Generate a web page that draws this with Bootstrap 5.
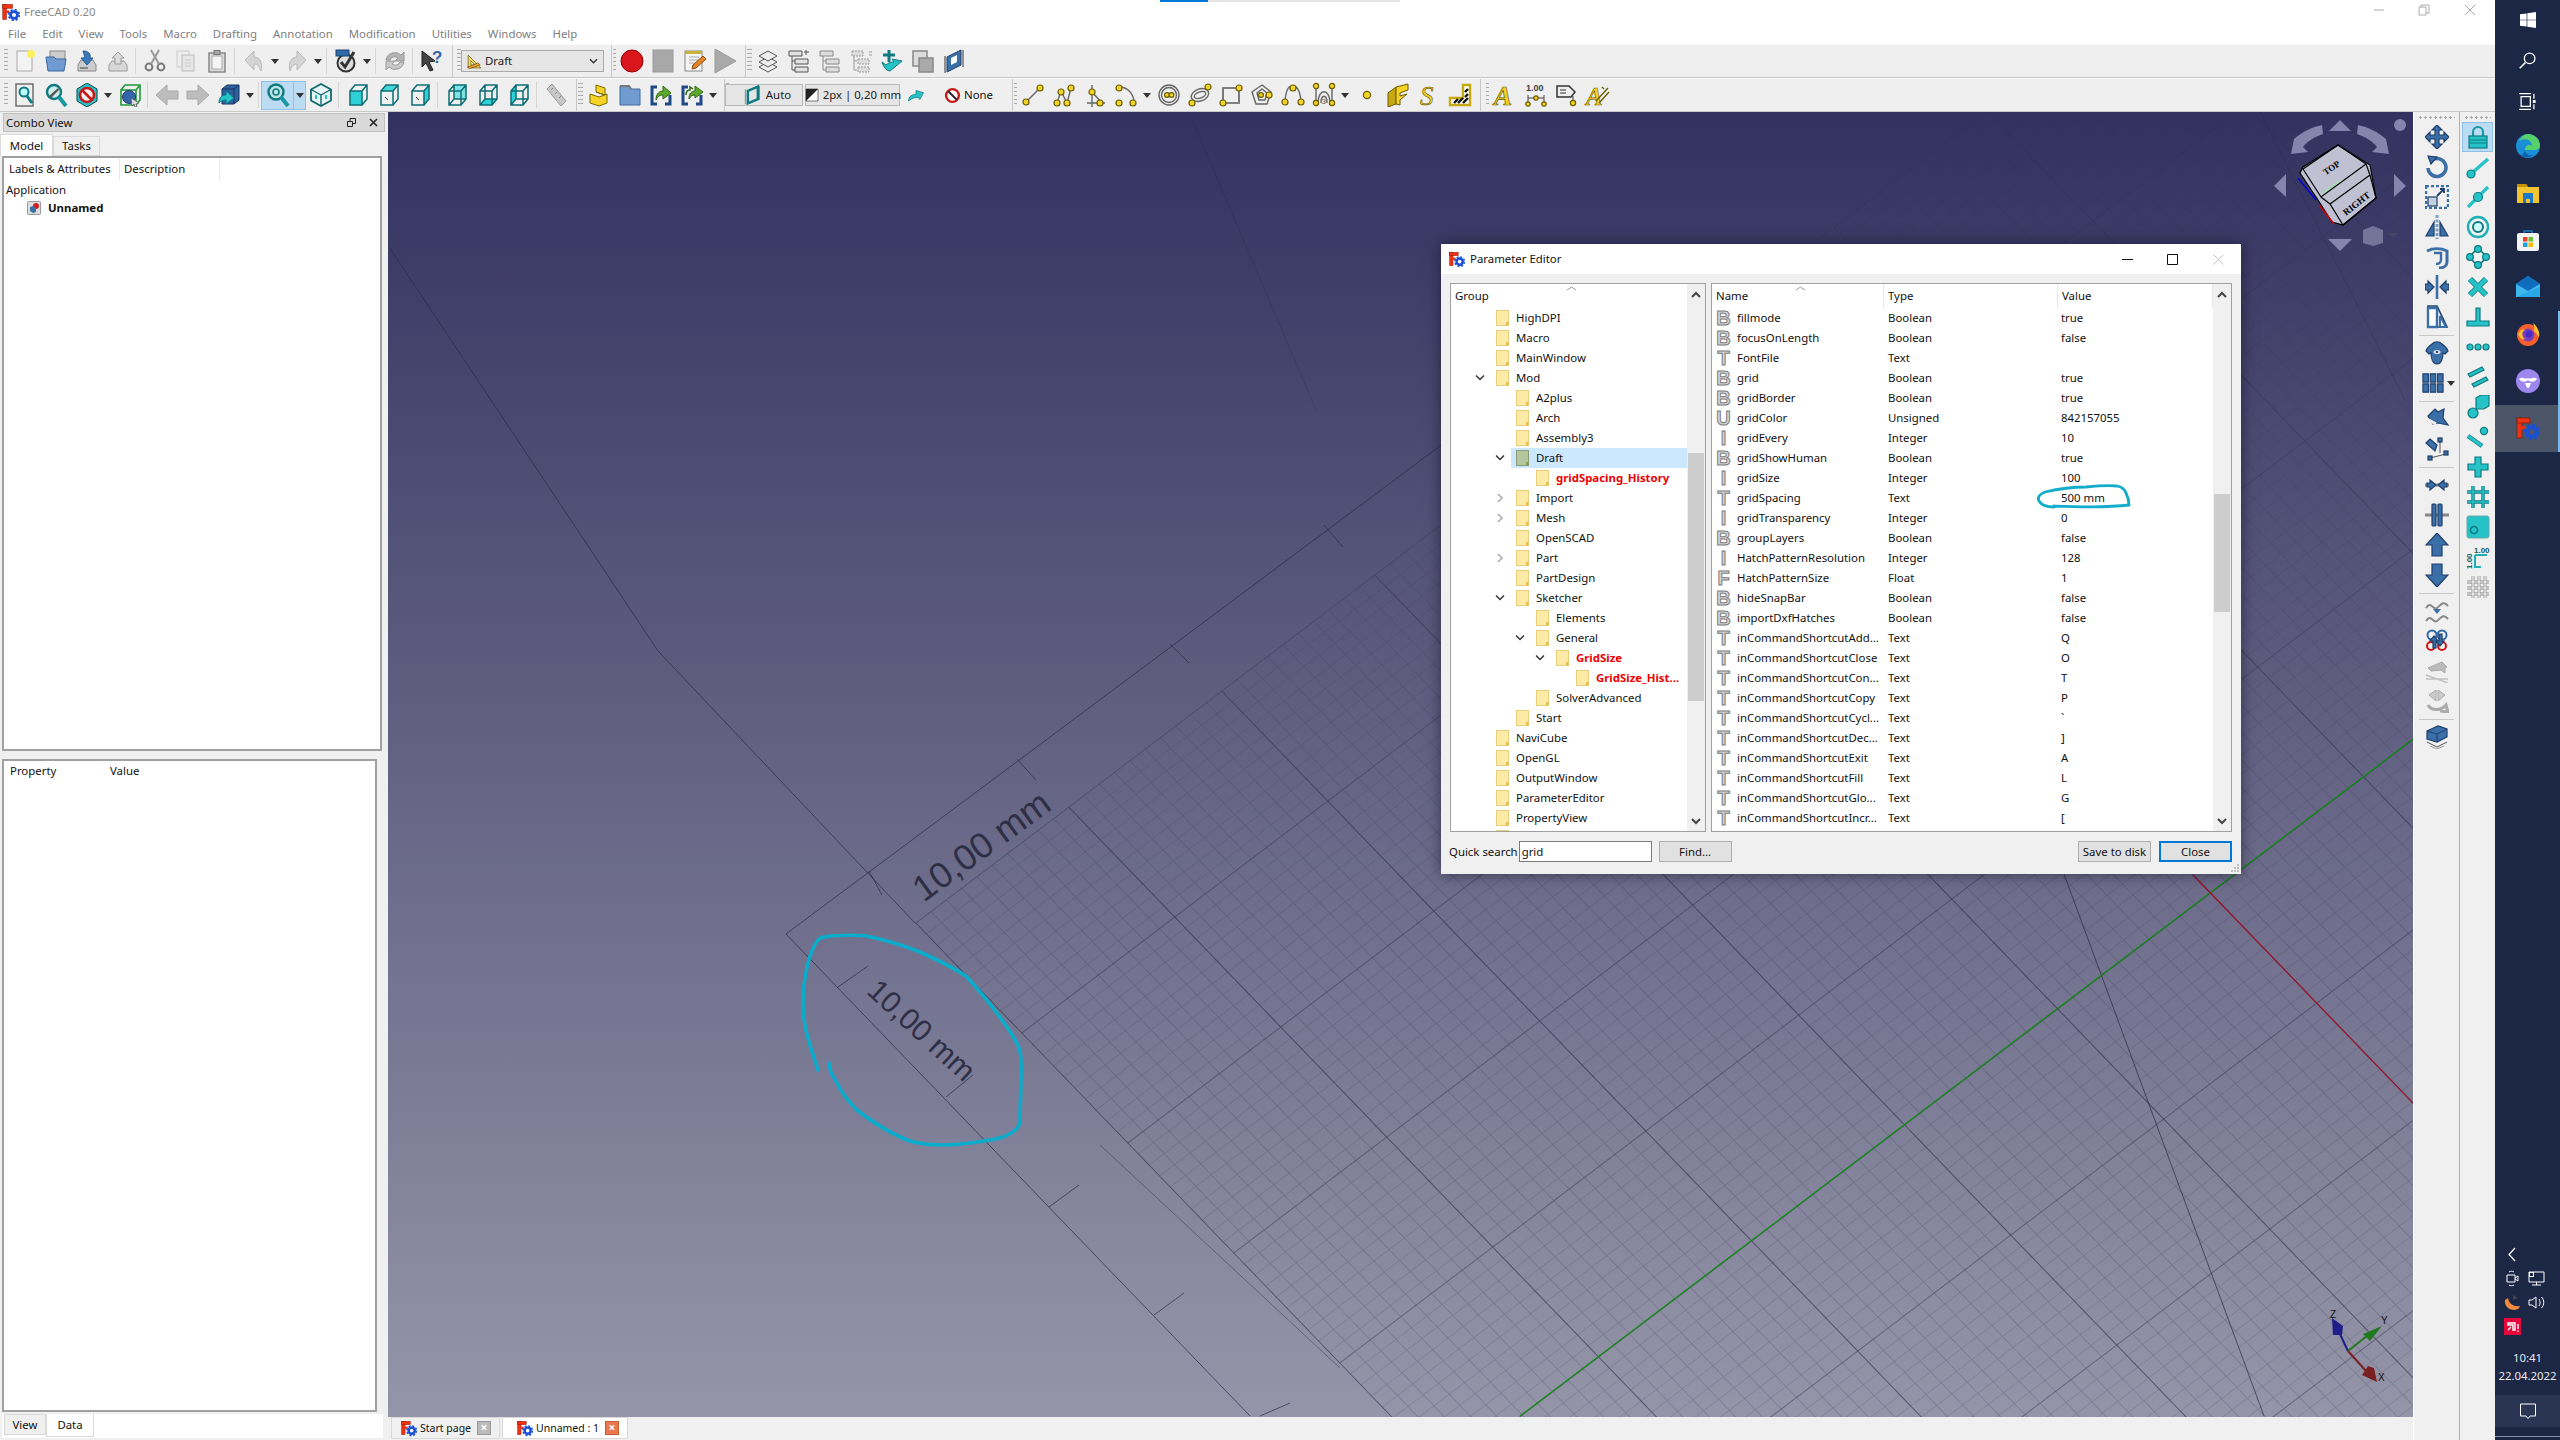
<!DOCTYPE html>
<html lang="en"><head><meta charset="utf-8"><title>FreeCAD 0.20</title>
<link href="https://cdn.jsdelivr.net/npm/bootstrap@5.3.0/dist/css/bootstrap.min.css" rel="stylesheet">
<script src="https://cdn.jsdelivr.net/npm/bootstrap@5.3.0/dist/js/bootstrap.bundle.min.js"></script>
<style>
html,body{margin:0;width:2560px;height:1440px;overflow:hidden;background:#f0f0f0}
body{font-family:"Noto Sans","Open Sans",sans-serif;font-size:11.4px;line-height:1.2;color:#111}
svg{display:block;flex:none;overflow:visible}
.defs{position:absolute;width:0;height:0}
.y{fill:#f5d327;stroke:#6b5d00;stroke-width:1.2}
.t{fill:#25c2c7;stroke:#0f7a80;stroke-width:1.2}
.tl{fill:none;stroke:#0f7a80;stroke-width:1.6}
.b{fill:#3b6fa8;stroke:#1e3f6b;stroke-width:1.2}
.g{fill:none;stroke:#666;stroke-width:1.4}
.win{width:2495px;height:1440px}
.titlebar{height:24px;background:#fff;color:#888;padding-left:2px}
.titlebar .ctl{position:absolute;top:4px}
.progress-strip{position:absolute;top:0;left:1160px;width:240px;height:2px;background:#e4e4e4}
.progress-strip i{display:block;width:48px;height:2px;background:#0078d7}
.menu{height:20px;background:#fff;color:#808080;padding-left:8px}
.menu span{margin-right:16px}
.tbar{height:34px;background:#efefef;border-top:1px solid #fafafa;border-bottom:1px solid #c8c8c8;flex:none}
.t2{height:34px}
.tb{width:31px;height:32px;display:flex;align-items:center;justify-content:center;flex:none}
.tb svg{width:24px;height:24px}
.ar{width:12px;height:32px;display:flex;align-items:center;justify-content:center;flex:none}
.ar::after{content:"";border:4px solid transparent;border-top:5px solid #333;margin-top:4px}
.sp{width:6px;height:26px;flex:none;position:relative}
.sp::after{content:"";position:absolute;left:2px;top:0;bottom:0;width:1px;background:#d4d4d4}
.dock{width:6px;height:32px;flex:none;border-right:1px solid #c8c8c8}
.hd{width:4px;height:24px;flex:none;margin:0 1px 0 4px;background:repeating-linear-gradient(#aaa 0 1px,transparent 1px 4px)}
.on{background:#bcdcf4;border:1px solid #8fc0e8;display:flex;height:29px;align-items:center;margin:0 -1px}
.tcombo{width:143px;height:22px;background:#e6e6e6;border:1px solid #aaa;display:flex;align-items:center;color:#222;margin-right:2px;padding-left:4px;position:relative}
.tcombo svg{width:17px;height:17px;margin-right:2px}
.tcombo .chev{position:absolute;right:5px;top:7px;width:9px;height:7px;margin:0}
.tbtn{height:22px;background:#e6e6e6;border:1px solid #b8b8b8;display:flex;align-items:center;justify-content:center;color:#222;flex:none;padding:0;border-radius:0;font-size:11.4px;white-space:nowrap}
.left{width:388px;flex:none;background:#f0f0f0;position:relative}
.dtitle{height:19px;margin:1px 3px 0 3px;background:#d9d9d9;border:1px solid #c0c0c0;padding:0 6px 0 2px}
.tabs{height:22px;margin-top:2px}
.tab{padding:0 8px;border:1px solid #d9d9d9;background:#f0f0f0;display:flex;align-items:center;justify-content:center;height:20px;align-self:flex-end}
.tab.act{background:#fff;border-bottom:0;height:22px;align-self:flex-start}
.pane{background:#fff;border:2px solid #a0a0a0;margin-left:2px}
.ph{height:22px;padding-left:5px}
.ph span{height:22px;display:flex;align-items:center;border-right:1px solid #e8e8e8}
.view{width:2025px;height:1305px;position:relative;overflow:hidden;background:linear-gradient(#33315f,#9595a9)}
.view>svg{position:absolute;left:0;top:0;width:2025px;height:1305px}
.docs{height:23px;padding-left:3px}
.dt{height:22px;display:flex;align-items:center;background:#f0f0f0;border:1px solid #d9d9d9;gap:3px;white-space:nowrap;font-size:10.5px}
.dt svg{width:16px;height:18px}
.dt b{display:flex;width:14px;height:14px;background:#bbb;border:1px solid #999;color:#fff;font-size:12px;line-height:12px;align-items:center;justify-content:center;margin-left:3px}
.dt.act{background:#fff}.dt.act b{background:#e8784e;border-color:#c85a32}
.side{width:47px;flex:none;border-right:1px solid #b0b0b0;border-left:1px solid #fff;background:#f0f0f0}
.side.sb{width:35px;border:0}
.vh{height:10px;margin:0 4px;background:radial-gradient(circle,#aaa 1px,transparent 1.2px) 0 3px/5px 5px repeat-x}
.si{height:30px;display:flex;align-items:center;justify-content:center;position:relative}
.si svg{width:24px;height:24px}
.si.on{background:#bcdcf4;border:1px solid #8fc0e8;height:30px;margin:0 2px}
.ss{height:6px;position:relative}
.ss::after{content:"";position:absolute;left:5px;right:5px;top:3px;height:1px;background:#c8c8c8}
/* dialog */
.dlg{position:absolute;left:1053px;top:132px;width:800px;height:630px;background:#f0f0f0;box-shadow:0 0 14px rgba(10,10,30,.55)}
.dlg-t{height:30px;background:#fff;padding-left:8px;position:relative}
.dlg-t .ctl{position:absolute;top:10px}
.dlg-b{padding:9px 9px 0 9px;gap:5px;height:558px}
.box{background:#fff;border:1px solid #a0a0a0;height:549px;position:relative;overflow:hidden}
.box.l{width:256px}.box.r{width:521px}
.hdr{height:24px}
.rows{height:523px;overflow:hidden}
.scr{position:absolute;right:0;top:0;bottom:0;width:18px;background:#f0f0f0}
.scr i{position:absolute;left:1px;right:1px;background:#cdcdcd}
.scr svg{position:absolute;left:4px;width:10px;height:7px}
.tr{height:20px;display:flex;align-items:center;white-space:nowrap}
.l0{padding-left:21px}.l1{padding-left:41px}.l2{padding-left:61px}.l3{padding-left:81px}.l4{padding-left:101px}
.ch{width:16px;height:20px;display:flex;align-items:center;justify-content:center;flex:none;margin-right:8px}
.ch svg{width:10px;height:8px}
.fo{width:13px;height:16px}
.lab{margin-left:7px}
.red{color:#ee0000;font-weight:700}
.sel{display:flex;align-items:center;background:#cce8ff;height:20px;margin-left:-5px;padding-left:5px;width:177px}
.pr{display:grid;grid-template-columns:172px 174px 1fr;height:20px;align-items:center;white-space:nowrap}
.pr>div:nth-child(1){padding-left:5px;display:flex;align-items:center}
.pr>div:nth-child(2){padding-left:4px}
.pr>div:nth-child(3){padding-left:3px}
.ty{width:13px;margin-right:7px;display:flex;justify-content:center;font:700 20px/20px "Liberation Sans",sans-serif;color:#d6d6d6;-webkit-text-stroke:1px #7c7c7c;flex:none}
.ph2{display:grid;grid-template-columns:172px 174px 155px;height:24px;align-items:center;padding:0}
.ph2 div{height:24px;display:flex;align-items:center;border-right:1px solid #e8e8e8;padding-left:4px}
.foot{margin-top:9px;padding:0 9px 0 8px;height:21px}
.foot .btn{height:21px;width:73px;padding:0;font-size:11.4px;background:#e1e1e1;border:1px solid #adadad;border-radius:0;color:#111;line-height:19px}
.foot .btn.cl{border:2px solid #0078d7;line-height:17px;margin-left:8px}
.foot .form-control{width:133px;height:21px;min-height:0;padding:0 2px;font-size:11.4px;border:1px solid #7a7a7a;border-radius:0;margin:0 7px 0 1px;font-family:inherit;color:#111}
/* taskbar */
.task{width:65px;height:1440px;background:#1b2745;color:#e8e8e8;flex:none}
.ti{display:flex;align-items:center;justify-content:center;position:relative;flex:none}
.ti.h47{height:47px}
.ti svg{width:24px;height:24px}
.ti.act{background:#4a5568}
.ti.act::after,.ti.mk::after{content:"";position:absolute;right:0;top:0;bottom:0;width:2px;background:#76b9ed}
.tray{display:grid;grid-template-columns:24px 24px;grid-auto-rows:24px;margin:0 0 11px 5px}
.tray div{display:flex;align-items:center;justify-content:center}
.tray svg{width:17px;height:17px}
.clk{text-align:center;font-size:11.4px;line-height:18px;margin-bottom:10px}
.ntf{height:32px;background:#2a3553;display:flex;align-items:center;justify-content:center}
.tfoot{height:13px}.tfoot i{display:block;height:1px;margin-top:9px;background:#8892a6}
</style></head>
<body>
<svg class="defs" aria-hidden="true">
<defs>
<linearGradient id="fade" gradientUnits="userSpaceOnUse" x1="0" y1="112" x2="0" y2="900"><stop offset="0" stop-color="#fff" stop-opacity=".25"/><stop offset="1" stop-color="#fff" stop-opacity="1"/></linearGradient>
</defs>
<symbol id="logo" viewBox="0 0 24 24"><rect x="1" y="2" width="5" height="20" fill="#ee3312" stroke="#8a1408" stroke-width=".7"/><rect x="1" y="2" width="13" height="5" fill="#ee3312" stroke="#8a1408" stroke-width=".7"/><rect x="5" y="10" width="5" height="3.500" fill="#ee3312"/><circle cx="16" cy="16" r="4.600" fill="none" stroke="#1a4fd8" stroke-width="3.800"/><circle cx="16" cy="16" r="7.200" fill="none" stroke="#1a4fd8" stroke-width="2.200" stroke-dasharray="3 2.650"/></symbol>
<symbol id="folder" viewBox="0 0 13 16" preserveAspectRatio="none"><rect x=".5" y=".5" width="12" height="15" fill="#fdeaa6" stroke="#e9cf7a"/><rect x="10" y="12" width="2.500" height="3.500" fill="#e6bd4e"/></symbol>
<symbol id="folder2" viewBox="0 0 13 16" preserveAspectRatio="none"><rect x=".5" y=".5" width="12" height="15" fill="#b4c79e" stroke="#8a9a76"/><rect x="10" y="12" width="2.500" height="3.500" fill="#8f9a50"/></symbol>
<symbol id="cd" viewBox="0 0 10 8"><path d="M1 1.500L5 5.500 9 1.500" fill="none" stroke="#333" stroke-width="1.500"/></symbol>
<symbol id="cr" viewBox="0 0 10 8"><path d="M3 0L7 4 3 8" fill="none" stroke="#aaa" stroke-width="1.500"/></symbol>
<symbol id="cu" viewBox="0 0 10 7"><path d="M1 6L5 2 9 6" fill="none" stroke="#444" stroke-width="2"/></symbol>
<symbol id="cdn" viewBox="0 0 10 7"><path d="M1 1L5 5 9 1" fill="none" stroke="#444" stroke-width="2"/></symbol>
<symbol id="new" viewBox="0 0 24 24"><rect x="4" y="2" width="15" height="20" fill="#f3f3f3" stroke="#aaa"/><circle cx="18" cy="5" r="4" fill="#fff15a"/></symbol>
<symbol id="open" viewBox="0 0 24 24"><rect x="6" y="2" width="15" height="14" fill="#ccc" stroke="#888"/><path d="M2 8h8l2 2h10l-2 12H4z" fill="#6f9bd1" stroke="#3c6aa3"/></symbol>
<symbol id="save" viewBox="0 0 24 24"><path d="M3 16l3-5h12l3 5v6H3z" fill="#ccc" stroke="#888"/><rect x="5" y="18" width="8" height="2" fill="#888"/><path d="M8 2c5 0 8 2 7 7h3l-6 7-6-7h3c1-2 0-4-1-7z" fill="#3b78b8" stroke="#2a5a8f"/></symbol>
<symbol id="saveas" viewBox="0 0 24 24"><path d="M3 16l3-4h12l3 4v6H3z" fill="#d8d8d8" stroke="#999"/><path d="M9 15V9H6l6-6 6 6h-3v6z" fill="#ddd" stroke="#999"/></symbol>
<symbol id="cut" viewBox="0 0 24 24"><circle cx="6" cy="18" r="3.400" fill="none" stroke="#777" stroke-width="2"/><circle cx="18" cy="18" r="3.400" fill="none" stroke="#777" stroke-width="2"/><path d="M8 15L16 1M16 15L8 1" stroke="#999" stroke-width="2"/></symbol>
<symbol id="copy" viewBox="0 0 24 24"><rect x="3" y="2" width="12" height="16" fill="#eee" stroke="#ccc"/><rect x="8" y="6" width="12" height="16" fill="#e6e6e6" stroke="#bbb"/><path d="M11 11h6M11 14h6M11 17h6" stroke="#ccc"/></symbol>
<symbol id="paste" viewBox="0 0 24 24"><rect x="4" y="4" width="16" height="19" fill="#ddd" stroke="#888" stroke-width="1.500"/><rect x="7" y="7" width="10" height="13" fill="#f5f5f5" stroke="#aaa"/><rect x="9" y="1.500" width="6" height="4" fill="#aaa" stroke="#777"/></symbol>
<symbol id="undo" viewBox="0 0 24 24"><path d="M3 11l9-9v6c6 0 9 6 7 14-2-5-4-7-7-7v6z" fill="#d4d4d4" stroke="#bbb"/></symbol>
<symbol id="redo" viewBox="0 0 24 24"><path d="M21 11l-9-9v6c-6 0-9 6-7 14 2-5 4-7 7-7v6z" fill="#d4d4d4" stroke="#bbb"/></symbol>
<symbol id="tick" viewBox="0 0 24 24"><circle cx="12" cy="14" r="8.500" fill="#ddd" stroke="#333" stroke-width="2"/><rect x="2" y="1" width="13" height="6" fill="#2f6aa8" stroke="#1c4270"/><path d="M7 13l4 5 9-15" fill="none" stroke="#333" stroke-width="3"/></symbol>
<symbol id="refresh" viewBox="0 0 24 24"><path d="M3 11a9 9 0 0 1 15-5l3-3v9h-9l3-3a5 5 0 0 0-8 2z" fill="#b4b4b4" stroke="#9a9a9a"/><path d="M21 13a9 9 0 0 1-15 5l-3 3v-9h9l-3 3a5 5 0 0 0 8-2z" fill="#c8c8c8" stroke="#9a9a9a"/></symbol>
<symbol id="draft" viewBox="0 0 24 24"><path d="M3 3v18h18z" fill="#f0d66a" stroke="#6b5d00"/><path d="M7 11v6h6z" fill="#efefef" stroke="#6b5d00"/><path d="M2 20l15-6 3 3-15 5z" fill="#e8a23a" stroke="#7a4a00"/></symbol>
<symbol id="rec" viewBox="0 0 24 24"><circle cx="12" cy="12" r="11" fill="#d9161c" stroke="#8e0000"/></symbol>
<symbol id="stop" viewBox="0 0 24 24"><rect x="2" y="1" width="20" height="22" fill="#a8a8a8" stroke="#999"/></symbol>
<symbol id="medit" viewBox="0 0 24 24"><rect x="3" y="2" width="17" height="20" fill="#f4f4f4" stroke="#888"/><rect x="3" y="2" width="17" height="3" fill="#c9b23a"/><path d="M7 8h10M7 11h10M7 14h6" stroke="#aaa"/><path d="M10 20l1-4 10-9 3 3-10 9z" fill="#e8832a" stroke="#8a4a10"/></symbol>
<symbol id="play" viewBox="0 0 24 24"><path d="M2 0l21 12L2 24z" fill="#aaa" stroke="#999"/></symbol>
<symbol id="layers" viewBox="0 0 24 24"><path d="M12 13l9 5-9 5-9-5z" fill="#eee" stroke="#555"/><path d="M12 8l9 5-9 5-9-5z" fill="#eee" stroke="#555"/><path d="M12 2l9 5-9 5-9-5z" fill="#eee" stroke="#555"/></symbol>
<symbol id="tree1" viewBox="0 0 24 24"><path d="M2 2h13v5H2zM8 10h13v5H8zM8 18h13v5H8z" fill="#e2e2e2" stroke="#555"/><path d="M5 7v14h3M5 12h3M19 1v5M17 3h5" fill="none" stroke="#555"/></symbol>
<symbol id="tree2" viewBox="0 0 24 24"><path d="M2 2h13v5H2zM8 10h13v5H8zM8 18h13v5H8z" fill="#ddd" stroke="#888"/><path d="M5 7v14h3M5 12h3" fill="none" stroke="#888"/></symbol>
<symbol id="tree3" viewBox="0 0 24 24"><path d="M3 2h11v5H3zM9 10h11v5H9zM9 18h11v5H9z" fill="#ddd" stroke="#999" stroke-dasharray="2 1"/><path d="M5 7v14h3M5 12h3M20 3h3M20 6h3" fill="none" stroke="#999"/></symbol>
<symbol id="addwp" viewBox="0 0 24 24"><path d="M9 1v12M3 6h12" stroke="#0f7a80" stroke-width="3"/><path d="M2 13c2 7 6 9 8 9l12-10-10-2 2 3c-4 0-6 1-8 3z" fill="#25c2c7" stroke="#0f7a80"/></symbol>
<symbol id="overlap" viewBox="0 0 24 24"><rect x="2" y="2" width="14" height="15" fill="#ddd" stroke="#888" stroke-width="1.500"/><rect x="8" y="9" width="14" height="14" fill="#aaa" stroke="#888" stroke-width="1.500"/></symbol>
<symbol id="section" viewBox="0 0 24 24"><path d="M5 8l14-7v15L5 23z" fill="#3b6fa8" stroke="#1e3f6b"/><path d="M9 9l6-3v7l-6 3z" fill="#fff"/><path d="M3 7v17M21 1v17" stroke="#333"/></symbol>
<symbol id="fitall" viewBox="0 0 24 24"><rect x="3" y="1" width="17" height="22" fill="#f0f0f0" stroke="#666" stroke-width="1.400"/><circle cx="11" cy="9" r="4.500" fill="#bff" stroke="#0f7a80" stroke-width="2"/><path d="M14 13l5 7" stroke="#0f7a80" stroke-width="3"/></symbol>
<symbol id="fitsel" viewBox="0 0 24 24"><circle cx="10" cy="9" r="7" fill="#cdeeee" stroke="#0f7a80" stroke-width="2.400"/><path d="M15 14l7 9" stroke="#1a9aa0" stroke-width="4"/><path d="M5 13l9-8 1 2-8 8z" fill="#555"/></symbol>
<symbol id="dstyle" viewBox="0 0 24 24"><path d="M12 0l10 6v12l-10 6-10-6V6z" fill="#25c2c7" stroke="#0f4a50"/><circle cx="12" cy="12" r="7" fill="#eee" stroke="#c81818" stroke-width="2.600"/><path d="M7 7l10 10" stroke="#c81818" stroke-width="2.600"/></symbol>
<symbol id="bbox" viewBox="0 0 24 24"><path d="M3 7h15v15H3zM3 7l4-5h15v15l-4 5M18 7l4-5" fill="none" stroke="#1f9a3c" stroke-width="1.600"/><circle cx="11" cy="14" r="6.500" fill="#3366aa" stroke="#1e3f6b"/><path d="M13 15l8 5-3 1 1 3-2 0-1-3-2 2z" fill="#ddd" stroke="#555" stroke-width=".7"/></symbol>
<symbol id="back" viewBox="0 0 24 24"><path d="M1 12l11-10v6h11v8H12v6z" fill="#bdbdbd" stroke="#a8a8a8"/></symbol>
<symbol id="fwd" viewBox="0 0 24 24"><path d="M23 12L12 2v6H1v8h11v6z" fill="#bdbdbd" stroke="#a8a8a8"/></symbol>
<symbol id="sync" viewBox="0 0 24 24"><path d="M5 6l5-4h12v15l-5 4H5z" fill="#2e5f9e" stroke="#16365f"/><path d="M5 6h12v15M17 6l5-4" fill="none" stroke="#16365f"/><path d="M2 20c0-6 3-8 7-8V8l8 7-8 6v-4c-3 0-5 1-7 3z" fill="#25c2c7" stroke="#0f7a80"/></symbol>
<symbol id="zoom" viewBox="0 0 24 24"><circle cx="10" cy="9" r="7.500" fill="#bde4e6" stroke="#0f7a80" stroke-width="2.400"/><path d="M15 14l7 9" stroke="#1a9aa0" stroke-width="4"/><circle cx="10" cy="9" r="3" fill="none" stroke="#0f7a80" stroke-width="1.600"/></symbol>
<symbol id="iso" viewBox="0 0 24 24"><path d="M12 1l10 5.500v11L12 23 2 17.500v-11z" fill="#e8f4f4" stroke="#0f6a70" stroke-width="1.800"/><path d="M12 12V23M12 12L2 6.500M12 12l10-5.500" stroke="#0f6a70" stroke-width="1.400"/><path d="M7 12v4M17 12v4" stroke="#25c2c7" stroke-width="2"/></symbol>
<symbol id="cf" viewBox="0 0 24 24"><path d="M4 8h12v14H4z" fill="#2ed1d6"/><path d="M4 8h12v14H4zM4 8l5-6h12v14l-5 6M16 8l5-6" fill="none" stroke="#0d6f75" stroke-width="1.500"/></symbol>
<symbol id="ct" viewBox="0 0 24 24"><path d="M4 8l5-6h12l-5 6z" fill="#2ed1d6"/><path d="M4 8h12v14H4zM4 8l5-6h12v14l-5 6M16 8l5-6" fill="#dff" fill-opacity=".15" stroke="#0d6f75" stroke-width="1.500"/><path d="M8 14l3 3" stroke="#333"/></symbol>
<symbol id="cr2" viewBox="0 0 24 24"><path d="M16 8l5-6v14l-5 6z" fill="#2ed1d6"/><path d="M4 8h12v14H4zM4 8l5-6h12v14l-5 6M16 8l5-6" fill="none" stroke="#0d6f75" stroke-width="1.500"/><path d="M8 14l3 3" stroke="#333"/></symbol>
<symbol id="cb" viewBox="0 0 24 24"><path d="M9 2h12v14H9z" fill="#7fe3e6"/><path d="M4 8h12v14H4zM4 8l5-6h12v14l-5 6M16 8l5-6M9 2v14h12M9 16l-5 6" fill="none" stroke="#0d6f75" stroke-width="1.500"/></symbol>
<symbol id="cbt" viewBox="0 0 24 24"><path d="M4 22l5-6h12l-5 6z" fill="#2ed1d6"/><path d="M4 8h12v14H4zM4 8l5-6h12v14l-5 6M16 8l5-6M9 2v14h12M9 16l-5 6" fill="none" stroke="#0d6f75" stroke-width="1.500"/></symbol>
<symbol id="cl" viewBox="0 0 24 24"><path d="M4 8l5-6v14l-5 6z" fill="#2ed1d6"/><path d="M4 8h12v14H4zM4 8l5-6h12v14l-5 6M16 8l5-6M9 2v14h12M9 16l-5 6" fill="none" stroke="#0d6f75" stroke-width="1.500"/></symbol>
<symbol id="ruler" viewBox="0 0 24 24"><path d="M8 1l14 17-5 5L3 6z" fill="#c8c8c8" stroke="#9a9a9a"/><path d="M7 7l2-2M11 11l2-2M15 15l2-2" stroke="#888"/></symbol>
<symbol id="part" viewBox="0 0 24 24"><path d="M9 2l9 3v7l-9-3z" fill="#f5d327" stroke="#7a6a00"/><path d="M3 11l9 3 8-3v9l-8 3-9-3z" fill="#f5d327" stroke="#7a6a00"/><path d="M9 9l9 3" stroke="#7a6a00"/></symbol>
<symbol id="group" viewBox="0 0 24 24"><path d="M2 3h9l2 3h9v16H2z" fill="#6f9bd1" stroke="#3c6aa3"/><path d="M2 3h9l2 3" fill="none" stroke="#777" stroke-width="2"/></symbol>
<symbol id="link" viewBox="0 0 24 24"><path d="M8 4H3v17h5M16 21h5v-9" fill="none" stroke="#204a87" stroke-width="3"/><path d="M7 17c0-7 4-9 7-9V3l8 7-8 6v-4c-3 0-5 1-7 5z" fill="#5ea82e" stroke="#2c6a10"/></symbol>
<symbol id="link2" viewBox="0 0 24 24"><path d="M8 4H3v17h5M16 21h5v-9" fill="none" stroke="#204a87" stroke-width="3"/><path d="M9 16c0-6 3-8 6-8V3l8 6-8 6v-3c-3 0-4 1-6 4z" fill="#5ea82e" stroke="#2c6a10"/><path d="M6 12c0-4 2-5 4-5V4l3 2" fill="none" stroke="#2c6a10" stroke-width="1.500"/></symbol>
<symbol id="autoi" viewBox="0 0 24 24"><path d="M7 7l12-5v15L7 22z" fill="none" stroke="#0f7a80" stroke-width="3"/><path d="M4 5v18M21 1v17" stroke="#777"/></symbol>
<symbol id="wid" viewBox="0 0 24 24"><path d="M3 3h18v18H3z" fill="#fff" stroke="#333"/><path d="M3 21L21 3H3z" fill="#222"/></symbol>
<symbol id="tarr" viewBox="0 0 24 24"><path d="M2 20c0-6 5-9 10-9V6l10 3-5 9-2-3c-4 0-8 1-13 5z" fill="#25c2c7" stroke="#0f7a80"/></symbol>
<symbol id="none" viewBox="0 0 24 24"><circle cx="12" cy="12" r="9" fill="#fff" stroke="#c81818" stroke-width="3.400"/><path d="M6 6l12 12" stroke="#222" stroke-width="2.600"/></symbol>
<symbol id="dline" viewBox="0 0 24 24"><path class="g" d="M5 19L19 5"/><circle class="y" cx="5" cy="19" r="3"/><circle class="y" cx="19" cy="5" r="3"/></symbol>
<symbol id="dwire" viewBox="0 0 24 24"><path class="g" d="M5 20L9 8l6 12 4-15"/><circle class="y" cx="5" cy="20" r="3"/><circle class="y" cx="9" cy="9" r="3"/><circle class="y" cx="15" cy="20" r="3"/><circle class="y" cx="19" cy="5" r="3"/></symbol>
<symbol id="dfillet" viewBox="0 0 24 24"><path class="g" d="M9 2v22M4 20h18M9 9l10 11"/><circle class="y" cx="9" cy="9" r="3"/><circle class="y" cx="17" cy="20" r="3"/></symbol>
<symbol id="darc" viewBox="0 0 24 24"><path class="g" d="M5 4c8 0 15 6 15 16"/><circle class="y" cx="5" cy="5" r="3"/><circle class="y" cx="19" cy="20" r="3"/><circle class="y" cx="5" cy="20" r="3"/></symbol>
<symbol id="dcircle" viewBox="0 0 24 24"><circle class="g" cx="12" cy="12" r="10"/><circle class="g" cx="12" cy="12" r="7.500"/><circle class="y" cx="10" cy="12" r="2.400"/><circle class="y" cx="14.500" cy="12" r="2.400"/></symbol>
<symbol id="dell" viewBox="0 0 24 24"><ellipse class="g" cx="12" cy="12" rx="9" ry="6" transform="rotate(-20 12 12)"/><ellipse class="g" cx="12" cy="12" rx="6" ry="3" transform="rotate(-20 12 12)"/><circle class="y" cx="4" cy="20" r="3"/><circle class="y" cx="20" cy="4" r="3"/></symbol>
<symbol id="drect" viewBox="0 0 24 24"><path d="M4 5h16v15H4z" fill="none" stroke="#444" stroke-width="1.600"/><path d="M4 5h16v15H4z" fill="none" stroke="#bbb" stroke-width=".5"/><circle class="y" cx="4" cy="20" r="3"/><circle class="y" cx="20" cy="5" r="3"/></symbol>
<symbol id="dpoly" viewBox="0 0 24 24"><path class="g" d="M12 2l9 7-4 12H6L2 9z"/><path class="g" d="M12 6l5 4-2 7H9l-2-7z"/><circle class="y" cx="11" cy="12" r="2.400"/><circle class="y" cx="19" cy="12" r="3"/></symbol>
<symbol id="dspl" viewBox="0 0 24 24"><path class="g" d="M4 19C5 5 8 3 12 3s7 3 8 16"/><circle class="y" cx="4" cy="19" r="3"/><circle class="y" cx="12" cy="5" r="3"/><circle class="y" cx="20" cy="19" r="3"/></symbol>
<symbol id="dpt" viewBox="0 0 24 24"><circle class="y" cx="12" cy="12" r="3.600"/></symbol>
<symbol id="dface" viewBox="0 0 24 24"><path d="M2 10l8-6v17l-8 3z" fill="#c7a90f" stroke="#6b5d00"/><path d="M10 4l12-3v6L14 10v3l7-2-7 6v5l-4-1z" fill="#f5d327" stroke="#6b5d00"/></symbol>
<symbol id="dhatch" viewBox="0 0 24 24"><path d="M15 2h7v20H2v-7h13z" fill="#fff" stroke="#c7a90f" stroke-width="2.400"/><path d="M6 20l4-4M10 20l5-5M15 20l5-5M17 14l3-3M17 9l3-3" stroke="#111" stroke-width="2.400"/></symbol>
<symbol id="dlabel" viewBox="0 0 24 24"><path d="M2 3h12l6 6-4 5H2z" fill="#eee" stroke="#333" stroke-width="1.500"/><path d="M5 7h6M5 10h6" stroke="#333"/><path d="M18 13v6" stroke="#333"/><circle class="y" cx="18" cy="20" r="2.600"/></symbol>
<symbol id="amove" viewBox="0 0 24 24"><path class="b" d="M12 0l5 5h-3v5h5V7l5 5-5 5v-3h-5v5h3l-5 5-5-5h3v-5H5v3l-5-5 5-5v3h5V5H7z"/></symbol>
<symbol id="arot" viewBox="0 0 24 24"><path d="M7 5a9 9 0 1 1-4 8" fill="none" stroke="#3b6fa8" stroke-width="3.600"/><path class="b" d="M3 1l9 1-6 7z"/></symbol>
<symbol id="ascale" viewBox="0 0 24 24"><path d="M1 1h22v22H1z" fill="none" stroke="#3b6fa8" stroke-width="2.400" stroke-dasharray="3 2"/><rect class="b" x="3" y="12" width="9" height="9" fill-opacity=".25" stroke-width="2"/><path d="M12 11l7-7M15 4h4v4" fill="none" stroke="#1e3f6b" stroke-width="1.800"/></symbol>
<symbol id="amirror" viewBox="0 0 24 24"><path class="b" d="M1 21l8-14v14zM23 21l-8-14v14z"/><path d="M12 0v24" stroke="#7ba0cc" stroke-width="3" stroke-dasharray="3 1.500"/></symbol>
<symbol id="aoff" viewBox="0 0 24 24"><path d="M2 6c6-3 14-3 20 0v11c0 4-4 6-8 6" fill="none" stroke="#3b6fa8" stroke-width="3"/><path d="M9 8h7v7c0 3-3 4-5 4" fill="none" stroke="#3b6fa8" stroke-width="2.400"/></symbol>
<symbol id="atrim" viewBox="0 0 24 24"><path d="M12 0v24" stroke="#3b6fa8" stroke-width="2.600"/><path class="b" d="M9 12L3 6v3H0v6h3v3zM15 12l6-6v3h3v6h-3v3z"/></symbol>
<symbol id="astr" viewBox="0 0 24 24"><path d="M3 1h9l10 21H3z" fill="none" stroke="#1e3f6b" stroke-width="1.600"/><path d="M3 3h9v19H3z" fill="#fff" stroke="#3b6fa8" stroke-width="2.400"/><path d="M15 11l6 11h-6z" fill="none" stroke="#3b6fa8" stroke-width="2"/></symbol>
<symbol id="asheep" viewBox="0 0 24 24"><path class="b" d="M7 3c3-3 7-3 10 0 3 2 5 4 6 7l-3 3-2-1c0 6-2 11-6 11s-6-5-6-11l-2 1-3-3c1-3 3-5 6-7z"/><ellipse cx="12" cy="11" rx="3.500" ry="2" fill="#dde"/><circle cx="12" cy="11" r="1.100" fill="#123"/></symbol>
<symbol id="aarr" viewBox="0 0 24 24"><path class="b" d="M1 2h6v9H1zM9 2h6v9H9zM17 2h6v9h-6zM1 13h6v9H1zM9 13h6v9H9zM17 13h6v9h-6z"/></symbol>
<symbol id="apath" viewBox="0 0 24 24"><path class="b" d="M3 9l7-7 3 3 6-3-1 9 5 7-10-2-5 1z"/><path d="M2 12l9 5" stroke="#eee" stroke-width="3"/></symbol>
<symbol id="apen" viewBox="0 0 24 24"><path d="M5 21l16-4M15 2v14" stroke="#555"/><rect class="b" x="13" y="1" width="4" height="4"/><rect class="b" x="3" y="19" width="4" height="4"/><rect class="b" x="19" y="14" width="4" height="4"/><path class="b" d="M1 6l4-4 7 6-2 6z"/></symbol>
<symbol id="ajoin" viewBox="0 0 24 24"><path d="M0 12h24" stroke="#888" stroke-width="3"/><path class="b" d="M11 12l-6-5v3H2v4h3v3zM13 12l6-5v3h3v4h-3v3z"/></symbol>
<symbol id="asplit" viewBox="0 0 24 24"><path d="M0 12h24" stroke="#888" stroke-width="3"/><rect class="b" x="7" y="1" width="4" height="22" rx="1"/><rect class="b" x="13" y="1" width="4" height="22" rx="1"/></symbol>
<symbol id="aup" viewBox="0 0 24 24"><path class="b" d="M12 0l11 12h-6v11H7V12H1z"/></symbol>
<symbol id="adn" viewBox="0 0 24 24"><path class="b" d="M12 24L1 12h6V1h10v11h6z"/></symbol>
<symbol id="awave" viewBox="0 0 24 24"><path d="M1 9c5-8 7 3 11 0s6-8 11-2M1 22c5-8 7 3 11 0s6-8 11-2" fill="none" stroke="#888" stroke-width="2"/><path d="M8 10h8l-4 5z" fill="#3b6fa8"/></symbol>
<symbol id="aflip" viewBox="0 0 24 24"><circle cx="6" cy="17" r="4" fill="none" stroke="#d01515" stroke-width="2"/><circle cx="17" cy="17" r="4" fill="none" stroke="#d01515" stroke-width="2"/><circle cx="7" cy="6" r="4.500" fill="none" stroke="#2f6aa8" stroke-width="2"/><circle cx="17" cy="6" r="4.500" fill="none" stroke="#2f6aa8" stroke-width="2"/><path class="b" d="M8 19v-7H5l4-5 4 5h-2v7zM14 5v7h-3l4 5 4-5h-2V5z"/></symbol>
<symbol id="agr1" viewBox="0 0 24 24"><path d="M1 16l22 8M1 20l22 0" stroke="#c0c0c0" stroke-width="1.400"/><path d="M3 9l14-6 5 5-2 1v5l-4-3-10 1z" fill="#bbb" stroke="#a8a8a8"/></symbol>
<symbol id="agr2" viewBox="0 0 24 24"><path d="M4 6l7-5v11zM20 6l-7-5v11z" fill="#ccc" stroke="#aaa"/><path d="M3 16c3 6 13 6 18 0l2 7-8-1" fill="none" stroke="#aaa" stroke-width="3"/></symbol>
<symbol id="abox" viewBox="0 0 24 24"><path class="b" d="M2 6l11-5 9 3v8l-10 5-10-3z"/><path d="M2 6l10 3 10-5M12 9v8" fill="none" stroke="#1e3f6b"/><path d="M2 17l10 5 10-5" fill="none" stroke="#555"/><path d="M5 21l7 3 7-3" fill="none" stroke="#999"/></symbol>
<symbol id="block" viewBox="0 0 24 24"><path d="M7 11V7a5 5 0 0 1 10 0v4" fill="none" stroke="#1a9aa0" stroke-width="2.200"/><rect class="t" x="3" y="11" width="18" height="12"/><path d="M4 15h16M4 18h16" stroke="#0f7a80"/></symbol>
<symbol id="bcoin" viewBox="0 0 24 24"><path d="M6 18L22 4" stroke="#25c2c7" stroke-width="3.400"/><circle class="t" cx="5" cy="19" r="4"/></symbol>
<symbol id="bmid" viewBox="0 0 24 24"><path d="M2 22L22 2" stroke="#25c2c7" stroke-width="3.200"/><circle class="t" cx="12" cy="12" r="4.500"/></symbol>
<symbol id="bcon" viewBox="0 0 24 24"><circle cx="12" cy="12" r="10" fill="none" stroke="#1fb0b5" stroke-width="2.400"/><circle cx="12" cy="12" r="5" fill="#cff" stroke="#0f7a80" stroke-width="2"/></symbol>
<symbol id="bpoly" viewBox="0 0 24 24"><path d="M12 3l9 9-9 9-9-9z" fill="none" stroke="#0f7a80" stroke-width="1.600"/><circle class="t" cx="12" cy="4" r="3.400"/><circle class="t" cx="4" cy="12" r="3.400"/><circle class="t" cx="20" cy="12" r="3.400"/><circle class="t" cx="12" cy="20" r="3.400"/></symbol>
<symbol id="bx" viewBox="0 0 24 24"><path d="M4 4l16 16M20 4L4 20" stroke="#0f7a80" stroke-width="6"/><path d="M4 4l16 16M20 4L4 20" stroke="#25c2c7" stroke-width="4.400"/></symbol>
<symbol id="bperp" viewBox="0 0 24 24"><path class="t" d="M10 3h4v13h9v5H1v-5h9z"/></symbol>
<symbol id="bdots" viewBox="0 0 24 24"><circle class="t" cx="4" cy="12" r="3"/><circle class="t" cx="12" cy="12" r="3"/><circle class="t" cx="20" cy="12" r="3"/></symbol>
<symbol id="bpar" viewBox="0 0 24 24"><path class="t" d="M2 9l14-7 2 3L4 12zM6 19l14-7 2 3-14 7z"/></symbol>
<symbol id="bbox3" viewBox="0 0 24 24"><path class="t" d="M10 3l5-3h8v11l-5 3H10z"/><circle class="t" cx="7" cy="18" r="5"/></symbol>
<symbol id="bpt" viewBox="0 0 24 24"><path d="M2 11l14 10" stroke="#0f7a80" stroke-width="4.400"/><path d="M2 11l14 10" stroke="#25c2c7" stroke-width="3"/><circle class="t" cx="18" cy="6" r="3.600"/></symbol>
<symbol id="bplus" viewBox="0 0 24 24"><path class="t" d="M9 2h6v7h7v6h-7v7H9v-7H2V9h7z"/></symbol>
<symbol id="bgrid" viewBox="0 0 24 24"><path d="M7 1v22M17 1v22M1 7h22M1 17h22" stroke="#0f7a80" stroke-width="3.400"/><path d="M7 1v22M17 1v22M1 7h22M1 17h22" stroke="#25c2c7" stroke-width="1.600"/></symbol>
<symbol id="bface" viewBox="0 0 24 24"><rect x="1" y="1" width="22" height="22" rx="2" fill="#25c2c7" stroke="#6aa"/><circle cx="8" cy="15" r="3.500" fill="none" stroke="#0f7a80" stroke-width="1.600"/></symbol>
<symbol id="bmesh" viewBox="0 0 24 24"><path d="M7 1v22M13 1v22M19 1v22M1 7h22M1 13h22M1 19h22" stroke="#888" stroke-width="2.800"/><path d="M7 1v22M13 1v22M19 1v22M1 7h22M1 13h22M1 19h22" stroke="#fff" stroke-width="1.200"/></symbol>
<symbol id="edge" viewBox="0 0 24 24"><circle cx="12" cy="12" r="12" fill="#1b8fd6"/><path d="M12 0a12 12 0 0 1 12 12c0 3-3 4-6 4H9c0-5 5-6 7-4 0-6-7-9-13-5 2-4 5-7 9-7z" fill="#55d06a"/><path d="M9 16c0 4 4 6 8 5-3 3-9 3-12 0 2 0 3-2 4-5z" fill="#0b5ea8"/></symbol>
<symbol id="expl" viewBox="0 0 24 24"><path d="M1 3h9l2 3h11v16H1z" fill="#f4c430"/><path d="M1 3h9l2 3H1z" fill="#c69000"/><path d="M7 12h10v10h-3v-4h-4v4H7z" fill="#1d79c6"/></symbol>
<symbol id="store" viewBox="0 0 24 24"><path d="M8 6V3h8v3" fill="none" stroke="#1d79c6" stroke-width="1.600"/><rect x="1" y="5" width="22" height="18" rx="2" fill="#f4f4f4"/><rect x="7" y="9" width="4.500" height="4.500" fill="#e8452a"/><rect x="12.500" y="9" width="4.500" height="4.500" fill="#6fbf30"/><rect x="7" y="14.500" width="4.500" height="4.500" fill="#1da1e0"/><rect x="12.500" y="14.500" width="4.500" height="4.500" fill="#f9b90a"/></symbol>
<symbol id="mail" viewBox="0 0 24 24"><path d="M0 9l12-8 12 8v13H0z" fill="#29a8e8"/><path d="M0 9l12-8 12 8-12 7z" fill="#0f6cbd"/><path d="M0 9l12 7 12-7v3L0 22z" fill="#50c2f0" fill-opacity=".55"/></symbol>
<symbol id="fox" viewBox="0 0 24 24"><circle cx="12" cy="13" r="11" fill="#f7602c"/><path d="M17 1c5 4 7 10 6 14-2-3-4-5-5-6 1-3 0-6-1-8z" fill="#fbbd2f"/><circle cx="12" cy="13" r="6.500" fill="#7a3fc0"/><circle cx="13" cy="12" r="3.500" fill="#4a2ac0"/><path d="M2 12c3-6 6-5 7-4-3 1-4 6 0 9-3 1-6-1-7-5z" fill="#fbbd2f"/></symbol>
<symbol id="purple" viewBox="0 0 24 24"><circle cx="12" cy="12" r="12" fill="#9d86ee"/><path d="M3 10c4-3 6 1 9-1 3 2 5-2 9 1-3 4-7 3-9 1-2 2-6 3-9-1z" fill="#fff"/><path d="M9 14h6l-2 5h-2z" fill="#fff"/></symbol>
</svg>

<div class="d-flex">
<div class="win d-flex flex-column position-relative">
  <div class="progress-strip"><i></i></div>
  <div class="titlebar d-flex align-items-center gap-1">
    <svg width="18" height="18"><use href="#logo"/></svg><span>FreeCAD 0.20</span>
    <svg class="ctl" style="left:2373px" width="12" height="12"><path d="M1 6h10" stroke="#aaa"/></svg>
    <svg class="ctl" style="left:2418px" width="12" height="12"><path d="M1 3h7v8H1zM3 3V1h8v8H8" fill="none" stroke="#aaa"/></svg>
    <svg class="ctl" style="left:2464px" width="12" height="12"><path d="M1 1l10 10M11 1L1 11" stroke="#aaa"/></svg>
  </div>
  <nav class="menu d-flex align-items-center"><span>File</span><span>Edit</span><span>View</span><span>Tools</span><span>Macro</span><span>Drafting</span><span>Annotation</span><span>Modification</span><span>Utilities</span><span>Windows</span><span>Help</span></nav>

  <div class="tbar d-flex align-items-center">
    <i class="hd"></i>
    <div class="tb"><svg><use href="#new"/></svg></div><div class="tb"><svg><use href="#open"/></svg></div><div class="tb"><svg><use href="#save"/></svg></div><div class="tb"><svg><use href="#saveas"/></svg></div><i class="sp"></i>
    <div class="tb"><svg><use href="#cut"/></svg></div><div class="tb"><svg><use href="#copy"/></svg></div><div class="tb"><svg><use href="#paste"/></svg></div><i class="sp"></i>
    <div class="tb"><svg><use href="#undo"/></svg></div><i class="ar"></i><div class="tb"><svg><use href="#redo"/></svg></div><i class="ar"></i><i class="sp"></i>
    <div class="tb"><svg><use href="#tick"/></svg></div><i class="ar"></i><i class="sp"></i>
    <div class="tb"><svg><use href="#refresh"/></svg></div><i class="sp"></i>
    <div class="tb"><svg viewBox="0 0 24 24"><path d="M2 2l13 10-6 1 4 8-3 1-4-8-4 4z" fill="#444" stroke="#222"/><text x="12" y="14" font-size="17" font-weight="700" fill="#3465a4" font-family="Liberation Sans">?</text></svg></div><i class="dock"></i>
    <i class="hd" style="margin-right:0"></i>
    <div class="tcombo ms-0"><svg><use href="#draft"/></svg>Draft<svg class="chev"><use href="#cd"/></svg></div><i class="dock"></i>
    <i class="hd me-0" style="margin-left:1px;width:3px"></i>
    <div class="tb"><svg><use href="#rec"/></svg></div><div class="tb"><svg><use href="#stop"/></svg></div><div class="tb"><svg><use href="#medit"/></svg></div><div class="tb"><svg><use href="#play"/></svg></div><i class="dock"></i>
    <i class="hd me-0" style="margin-left:1px;width:5px"></i>
    <div class="tb"><svg><use href="#layers"/></svg></div><div class="tb"><svg><use href="#tree1"/></svg></div><div class="tb"><svg><use href="#tree2"/></svg></div><div class="tb"><svg><use href="#tree3"/></svg></div><div class="tb"><svg><use href="#addwp"/></svg></div><div class="tb"><svg><use href="#overlap"/></svg></div><div class="tb"><svg><use href="#section"/></svg></div>
  </div>
  <div class="tbar t2 d-flex align-items-center">
    <i class="hd"></i>
    <div class="tb"><svg><use href="#fitall"/></svg></div><div class="tb"><svg><use href="#fitsel"/></svg></div><div class="tb"><svg><use href="#dstyle"/></svg></div><i class="ar"></i><div class="tb"><svg><use href="#bbox"/></svg></div><i class="sp"></i>
    <div class="tb"><svg><use href="#back"/></svg></div><div class="tb"><svg><use href="#fwd"/></svg></div><div class="tb"><svg><use href="#sync"/></svg></div><i class="ar"></i><i class="sp"></i>
    <div class="on"><div class="tb"><svg><use href="#zoom"/></svg></div><i class="ar" style="border-left:1px solid #8fc0e8;height:27px"></i></div><div class="tb"><svg><use href="#iso"/></svg></div><i class="sp"></i>
    <div class="tb"><svg><use href="#cf"/></svg></div><div class="tb"><svg><use href="#ct"/></svg></div><div class="tb"><svg><use href="#cr2"/></svg></div><i class="sp"></i>
    <div class="tb"><svg><use href="#cb"/></svg></div><div class="tb"><svg><use href="#cbt"/></svg></div><div class="tb"><svg><use href="#cl"/></svg></div><i class="sp"></i>
    <div class="tb"><svg><use href="#ruler"/></svg></div><i class="dock"></i>
    <i class="hd me-0" style="margin-left:1px;width:5px"></i>
    <div class="tb"><svg><use href="#part"/></svg></div><div class="tb"><svg><use href="#group"/></svg></div><div class="tb"><svg><use href="#link"/></svg></div><div class="tb"><svg><use href="#link2"/></svg></div><i class="ar"></i><i class="dock"></i>
    <i class="hd me-0" style="margin-left:1px;width:3px"></i>
    <button class="tbtn" style="width:78px;gap:4px;margin-left:-4px;padding-left:5px"><svg width="20" height="20"><use href="#autoi"/></svg>Auto</button>
    <button class="tbtn" style="width:95px;gap:3px;margin-left:2px"><svg width="16" height="16"><use href="#wid"/></svg>2px | 0,20 mm</button>
    <div class="tb"><svg style="width:18px;height:18px"><use href="#tarr"/></svg></div>
    <div class="d-flex align-items-center" style="gap:3px;width:76px;padding-left:13px"><svg width="17" height="17"><use href="#none"/></svg>None</div><i class="dock"></i>
    <i class="hd me-0" style="margin-left:1px;width:3px"></i>
    <div class="tb"><svg><use href="#dline"/></svg></div><div class="tb"><svg><use href="#dwire"/></svg></div><div class="tb"><svg><use href="#dfillet"/></svg></div><div class="tb"><svg><use href="#darc"/></svg></div><i class="ar"></i><div class="tb"><svg><use href="#dcircle"/></svg></div><div class="tb"><svg><use href="#dell"/></svg></div><div class="tb"><svg><use href="#drect"/></svg></div><div class="tb"><svg><use href="#dpoly"/></svg></div><div class="tb"><svg><use href="#dspl"/></svg></div>
    <div class="tb"><svg viewBox="0 0 24 24"><path class="g" d="M4 2v20M20 2v20M6 20C6 5 18 5 18 20M9 20c0-9 6-9 6 0"/><text x="9.500" y="21" font-size="8" fill="#555" font-family="Liberation Sans">3</text><circle class="y" cx="4" cy="3" r="2.600"/><circle class="y" cx="20" cy="3" r="2.600"/><circle class="y" cx="4" cy="20" r="2.600"/><circle class="y" cx="20" cy="20" r="2.600"/></svg></div><i class="ar"></i>
    <div class="tb"><svg><use href="#dpt"/></svg></div><div class="tb"><svg><use href="#dface"/></svg></div>
    <div class="tb"><svg viewBox="0 0 24 24"><text x="3" y="22" font-size="27" font-style="italic" font-family="Liberation Serif" fill="#f5d327" stroke="#6b5d00" stroke-width=".6">S</text></svg></div>
    <div class="tb"><svg><use href="#dhatch"/></svg></div><i class="dock"></i>
    <i class="hd me-0" style="margin-left:5px;width:3px"></i>
    <div class="tb"><svg viewBox="0 0 24 24"><text x="1" y="22" font-size="27" font-weight="700" font-style="italic" font-family="Liberation Serif" fill="#f5d327" stroke="#6b5d00" stroke-width=".7">A</text></svg></div>
    <div class="tb"><svg viewBox="0 0 24 24"><text x="2" y="8" font-size="9" font-weight="700" fill="#444" font-family="Liberation Sans">1.00</text><path d="M4 12v10M20 12v10M4 15h16" stroke="#444" fill="none"/><circle class="y" cx="12" cy="15" r="2.200"/><circle class="y" cx="4" cy="21" r="2.200"/><circle class="y" cx="20" cy="21" r="2.200"/></svg></div>
    <div class="tb"><svg><use href="#dlabel"/></svg></div>
    <div class="tb"><svg viewBox="0 0 24 24"><text x="0" y="22" font-size="25" font-weight="700" font-style="italic" font-family="Liberation Serif" fill="#f5d327" stroke="#6b5d00" stroke-width=".6">A</text><path d="M10 18L22 5M13 20L23 9M16 4l2 2" stroke="#6b5d00" fill="none" stroke-width="1.400"/></svg></div>
  </div>

  <div class="d-flex flex-grow-1" style="min-height:0">
    <!-- combo view -->
    <div class="left d-flex flex-column">
      <div class="dtitle d-flex align-items-center justify-content-between"><span>Combo View</span>
        <span class="d-flex" style="gap:13px"><svg width="9" height="9"><path d="M.5 3.500h5v5h-5zM3 3V.5h5.500v5H6" fill="none" stroke="#222"/></svg><svg width="9" height="9"><path d="M1 1l7 7M8 1L1 8" stroke="#222" stroke-width="1.600"/></svg></span></div>
      <div class="tabs d-flex"><div class="tab act" style="width:53px">Model</div><div class="tab" style="width:47px">Tasks</div></div>
      <div class="pane" style="height:595px;width:380px">
        <div class="ph d-flex"><span style="width:111px">Labels &amp; Attributes</span><span style="width:100px;padding-left:4px">Description</span></div>
        <div style="padding:0 0 0 2px;line-height:19px">Application</div>
        <div class="d-flex align-items-center" style="padding-left:23px;height:18px;gap:7px"><svg width="14" height="14" viewBox="0 0 14 14"><rect x=".5" y=".5" width="13" height="13" rx="1" fill="#ddd" stroke="#999"/><circle cx="9" cy="5" r="3" fill="#cf2020"/><path d="M3 6l3-1 3 2v4l-3 1-3-2z" fill="#3b6fa8"/></svg><b>Unnamed</b></div>
      </div>
      <div class="pane" style="height:653px;width:375px;margin-top:8px">
        <div class="ph d-flex" style="height:20px"><span style="width:101px;height:20px;padding-left:1px;border:0">Property</span><span style="height:20px;border:0">Value</span></div>
      </div>
      <div class="d-flex flex-grow-1" style="background:#fff;margin:2px 5px 2px 2px;padding-left:2px">
        <div class="tab" style="width:42px;height:21px;align-self:flex-start">View</div><div class="tab act" style="width:48px;height:23px;border-top:0;border-bottom:1px solid #d9d9d9">Data</div>
      </div>
    </div>
    <!-- centre -->
    <div class="d-flex flex-column" style="width:2025px">
      <div class="view">
        <svg viewBox="388 112 2025 1305">
          <defs>
            <pattern id="gm" width="1" height="1" patternUnits="userSpaceOnUse" patternTransform="matrix(15.3 -11.6 10.6 11 915 923)"><path d="M0 0H1M0 0V1" stroke="#2a2a4a" stroke-opacity=".3" stroke-width=".07" fill="none"/></pattern>
            <pattern id="gM" width="10" height="10" patternUnits="userSpaceOnUse" patternTransform="matrix(15.3 -11.6 10.6 11 915 923)"><path d="M0 0H10M0 0V10" stroke="#24243c" stroke-opacity=".65" stroke-width=".075" fill="none"/></pattern>
            <mask id="gmask" maskUnits="userSpaceOnUse" x="388" y="112" width="2025" height="1305"><rect x="388" y="112" width="2025" height="1305" fill="url(#fade)"/></mask>
          </defs>
          <g mask="url(#gmask)">
            <path d="M915 923L2445 -237 3505 863 1975 2023z" fill="url(#gm)"/>
            <path d="M915 923L2445 -237 3505 863 1975 2023z" fill="url(#gM)"/>
          </g>
          <g fill="none" stroke="#2a2a44" stroke-opacity=".7">
            <path d="M389 247L658 651 915 923M786 934L1448 440M786 934L1250 1416M2064 874L2264 1416"/>
            <path d="M1189 112L1316 410M2260 112L2405 400" stroke-opacity=".3"/>
            <path d="M869 871L882 895M1017 759L1036 780M1170 644L1189 663M1324 525L1343 547M838 987L868 966M946 1097L973 1075M1049 1207L1079 1185M1154 1315L1184 1293M1260 1416L1290 1403"/>
            <path d="M1100 1145L1340 1368" stroke-opacity=".45"/>
          </g>
          <path d="M1520 1416L2413 739" stroke="#0a900a" stroke-width="1.200" fill="none"/>
          <path d="M2193 875L2413 1103" stroke="#a01428" stroke-width="1.200" fill="none"/>
          <text x="983" y="848" text-anchor="middle" dominant-baseline="middle" transform="rotate(-36 983 848)" font-family="Liberation Sans" font-size="36" fill="#2e2e44">10,00 mm</text>
          <text x="920" y="1032" text-anchor="middle" dominant-baseline="middle" transform="rotate(42.500 920 1032)" font-family="Liberation Sans" font-size="30" fill="#2e2e44">10,00 mm</text>
          <path d="M818 1070C811 1048 803 1028 803 1005 803 975 810 950 818 940 821 937 824 937 830 936 845 935 858 935 867 936 885 940 905 946 920 952 940 961 955 968 967 977 985 997 1005 1022 1017 1043 1022 1053 1021 1063 1021 1073 1021 1090 1020 1108 1020 1123 1018 1130 1008 1136 1000 1138 980 1142 960 1145 943 1145 930 1145 918 1144 907 1140 888 1132 872 1122 857 1110 848 1101 841 1092 837 1083 832 1075 829 1070 829 1063" fill="none" stroke="#0aaccb" stroke-width="3.600" stroke-linecap="round"/>
          <!-- navicube -->
          <g fill="#8584ad">
            <path d="M2329 131L2340 120 2351 131zM2286 174L2274 186 2286 197zM2394 174L2406 186 2394 197zM2328 239H2352L2340 251z"/>
            <circle cx="2400" cy="125" r="6"/>
            <path d="M2291 154L2294 139C2302 132 2312 127 2322 125L2323 134C2314 137 2308 141 2303 147L2308 152zM2389 154L2386 139C2378 132 2368 127 2358 125L2357 134C2366 137 2372 141 2377 147L2372 152z"/>
          </g>
          <path d="M2373 226L2383 230V243L2373 246 2363 243V230z" fill="#75759a"/><path d="M2388 233H2398L2393 238z" fill="#444466"/>
          <path d="M2338 145L2370 165 2376 198 2343 225 2332 222 2318 200 2300 173 2303 167z" fill="#bfc0d2" stroke="#000" stroke-width="1.200"/>
          <path d="M2303 169L2338 145 2366 164 2321 197zM2330 204L2370 175 2376 198 2343 225M2321 197L2330 204 2343 225M2366 164L2370 175" fill="none" stroke="#000" stroke-width="1.200"/>
          <path d="M2298 178L2316 200" stroke="#0000d8" stroke-width="1.400"/><path d="M2322 193L2342 180" stroke="#9fe59f" stroke-width="1.400"/><path d="M2320 206L2334 224" stroke="#d80000" stroke-width="1.400"/>
          <text x="2331" y="171" text-anchor="middle" transform="rotate(-35 2331 167)" font-family="Liberation Serif" font-weight="700" font-size="9">TOP</text>
          <text x="2356" y="207" text-anchor="middle" transform="rotate(-38 2356 203)" font-family="Liberation Serif" font-weight="700" font-size="9.500">RIGHT</text>
          <!-- axis -->
          <path d="M2348 1351L2338 1330" stroke="#1e1e88" stroke-width="2"/><path d="M2332 1318L2343 1326 2342 1335 2333 1335z" fill="#1e1e88"/>
          <path d="M2348 1351L2368 1335" stroke="#1f7a1f" stroke-width="2"/><path d="M2382 1326L2370 1341 2363 1334z" fill="#1f7a1f"/>
          <path d="M2348 1351L2366 1371" stroke="#7a1f22" stroke-width="2"/><path d="M2377 1382L2362 1375 2368 1366 2374 1368z" fill="#7a1f22"/>
          <g font-family="Liberation Sans" font-size="10" fill="#111"><text x="2330" y="1318">Z</text><text x="2381" y="1324">Y</text><text x="2378" y="1381">X</text></g>
        </svg>

        <div class="dlg d-flex flex-column">
          <div class="dlg-t d-flex align-items-center" style="gap:5px"><svg width="16" height="16"><use href="#logo"/></svg><span>Parameter Editor</span>
            <svg class="ctl" style="left:681px" width="11" height="11"><path d="M0 5.500h11" stroke="#111"/></svg>
            <svg class="ctl" style="left:726px" width="11" height="11"><path d="M.5.500h10v10H.5z" fill="none" stroke="#111"/></svg>
            <svg class="ctl" style="left:772px" width="11" height="11"><path d="M.5.500l10 10M10.500.500l-10 10" stroke="#c4c4c4"/></svg>
          </div>
          <div class="dlg-b d-flex">
            <div class="box l">
              <div class="hdr d-flex align-items-center" style="padding-left:4px">Group</div>
              <div class="rows" style="width:238px">
                <div class="tr l0"><i class="ch"></i><svg class="fo"><use href="#folder"/></svg><span class="lab">HighDPI</span></div>
                <div class="tr l0"><i class="ch"></i><svg class="fo"><use href="#folder"/></svg><span class="lab">Macro</span></div>
                <div class="tr l0"><i class="ch"></i><svg class="fo"><use href="#folder"/></svg><span class="lab">MainWindow</span></div>
                <div class="tr l0"><i class="ch"><svg><use href="#cd"/></svg></i><svg class="fo"><use href="#folder"/></svg><span class="lab">Mod</span></div>
                <div class="tr l1"><i class="ch"></i><svg class="fo"><use href="#folder"/></svg><span class="lab">A2plus</span></div>
                <div class="tr l1"><i class="ch"></i><svg class="fo"><use href="#folder"/></svg><span class="lab">Arch</span></div>
                <div class="tr l1"><i class="ch"></i><svg class="fo"><use href="#folder"/></svg><span class="lab">Assembly3</span></div>
                <div class="tr l1"><i class="ch"><svg><use href="#cd"/></svg></i><div class="sel"><svg class="fo"><use href="#folder2"/></svg><span class="lab">Draft</span></div></div>
                <div class="tr l2"><i class="ch"></i><svg class="fo"><use href="#folder"/></svg><span class="lab red">gridSpacing_History</span></div>
                <div class="tr l1"><i class="ch"><svg><use href="#cr"/></svg></i><svg class="fo"><use href="#folder"/></svg><span class="lab">Import</span></div>
                <div class="tr l1"><i class="ch"><svg><use href="#cr"/></svg></i><svg class="fo"><use href="#folder"/></svg><span class="lab">Mesh</span></div>
                <div class="tr l1"><i class="ch"></i><svg class="fo"><use href="#folder"/></svg><span class="lab">OpenSCAD</span></div>
                <div class="tr l1"><i class="ch"><svg><use href="#cr"/></svg></i><svg class="fo"><use href="#folder"/></svg><span class="lab">Part</span></div>
                <div class="tr l1"><i class="ch"></i><svg class="fo"><use href="#folder"/></svg><span class="lab">PartDesign</span></div>
                <div class="tr l1"><i class="ch"><svg><use href="#cd"/></svg></i><svg class="fo"><use href="#folder"/></svg><span class="lab">Sketcher</span></div>
                <div class="tr l2"><i class="ch"></i><svg class="fo"><use href="#folder"/></svg><span class="lab">Elements</span></div>
                <div class="tr l2"><i class="ch"><svg><use href="#cd"/></svg></i><svg class="fo"><use href="#folder"/></svg><span class="lab">General</span></div>
                <div class="tr l3"><i class="ch"><svg><use href="#cd"/></svg></i><svg class="fo"><use href="#folder"/></svg><span class="lab red">GridSize</span></div>
                <div class="tr l4"><i class="ch"></i><svg class="fo"><use href="#folder"/></svg><span class="lab red">GridSize_Hist...</span></div>
                <div class="tr l2"><i class="ch"></i><svg class="fo"><use href="#folder"/></svg><span class="lab">SolverAdvanced</span></div>
                <div class="tr l1"><i class="ch"></i><svg class="fo"><use href="#folder"/></svg><span class="lab">Start</span></div>
                <div class="tr l0"><i class="ch"></i><svg class="fo"><use href="#folder"/></svg><span class="lab">NaviCube</span></div>
                <div class="tr l0"><i class="ch"></i><svg class="fo"><use href="#folder"/></svg><span class="lab">OpenGL</span></div>
                <div class="tr l0"><i class="ch"></i><svg class="fo"><use href="#folder"/></svg><span class="lab">OutputWindow</span></div>
                <div class="tr l0"><i class="ch"></i><svg class="fo"><use href="#folder"/></svg><span class="lab">ParameterEditor</span></div>
                <div class="tr l0"><i class="ch"></i><svg class="fo"><use href="#folder"/></svg><span class="lab">PropertyView</span></div>
                <div class="tr l0"><i class="ch"></i><svg class="fo"><use href="#folder"/></svg></div>
              </div>
              <svg class="position-absolute" style="left:115px;top:2px" width="11" height="5"><path d="M1 4l4.500-3L10 4" fill="none" stroke="#999"/></svg>
              <div class="scr"><i style="top:169px;height:248px"></i><svg style="top:7px"><use href="#cu"/></svg><svg style="bottom:6px"><use href="#cdn"/></svg></div>
            </div>
            <div class="box r">
              <div class="ph2"><div style="padding-left:4px">Name</div><div>Type</div><div>Value</div></div>
              <div class="rows" style="width:502px">
                <div class="pr"><div><span class="ty">B</span>fillmode</div><div>Boolean</div><div>true</div></div>
                <div class="pr"><div><span class="ty">B</span>focusOnLength</div><div>Boolean</div><div>false</div></div>
                <div class="pr"><div><span class="ty">T</span>FontFile</div><div>Text</div><div></div></div>
                <div class="pr"><div><span class="ty">B</span>grid</div><div>Boolean</div><div>true</div></div>
                <div class="pr"><div><span class="ty">B</span>gridBorder</div><div>Boolean</div><div>true</div></div>
                <div class="pr"><div><span class="ty">U</span>gridColor</div><div>Unsigned</div><div>842157055</div></div>
                <div class="pr"><div><span class="ty">I</span>gridEvery</div><div>Integer</div><div>10</div></div>
                <div class="pr"><div><span class="ty">B</span>gridShowHuman</div><div>Boolean</div><div>true</div></div>
                <div class="pr"><div><span class="ty">I</span>gridSize</div><div>Integer</div><div>100</div></div>
                <div class="pr"><div><span class="ty">T</span>gridSpacing</div><div>Text</div><div>500 mm</div></div>
                <div class="pr"><div><span class="ty">I</span>gridTransparency</div><div>Integer</div><div>0</div></div>
                <div class="pr"><div><span class="ty">B</span>groupLayers</div><div>Boolean</div><div>false</div></div>
                <div class="pr"><div><span class="ty">I</span>HatchPatternResolution</div><div>Integer</div><div>128</div></div>
                <div class="pr"><div><span class="ty">F</span>HatchPatternSize</div><div>Float</div><div>1</div></div>
                <div class="pr"><div><span class="ty">B</span>hideSnapBar</div><div>Boolean</div><div>false</div></div>
                <div class="pr"><div><span class="ty">B</span>importDxfHatches</div><div>Boolean</div><div>false</div></div>
                <div class="pr"><div><span class="ty">T</span>inCommandShortcutAdd...</div><div>Text</div><div>Q</div></div>
                <div class="pr"><div><span class="ty">T</span>inCommandShortcutClose</div><div>Text</div><div>O</div></div>
                <div class="pr"><div><span class="ty">T</span>inCommandShortcutCon...</div><div>Text</div><div>T</div></div>
                <div class="pr"><div><span class="ty">T</span>inCommandShortcutCopy</div><div>Text</div><div>P</div></div>
                <div class="pr"><div><span class="ty">T</span>inCommandShortcutCycl...</div><div>Text</div><div>`</div></div>
                <div class="pr"><div><span class="ty">T</span>inCommandShortcutDec...</div><div>Text</div><div>]</div></div>
                <div class="pr"><div><span class="ty">T</span>inCommandShortcutExit</div><div>Text</div><div>A</div></div>
                <div class="pr"><div><span class="ty">T</span>inCommandShortcutFill</div><div>Text</div><div>L</div></div>
                <div class="pr"><div><span class="ty">T</span>inCommandShortcutGlo...</div><div>Text</div><div>G</div></div>
                <div class="pr"><div><span class="ty">T</span>inCommandShortcutIncr...</div><div>Text</div><div>[</div></div>
                <div class="pr"><div><svg width="13" height="16"><rect y="3" width="13" height="13" fill="#d0d0d0" stroke="#8a8a8a"/></svg></div><div></div><div></div></div>
              </div>
              <svg class="position-absolute" style="left:83px;top:2px" width="11" height="5"><path d="M1 4l4.500-3L10 4" fill="none" stroke="#999"/></svg>
              <div class="scr"><i style="top:210px;height:118px"></i><svg style="top:7px"><use href="#cu"/></svg><svg style="bottom:6px"><use href="#cdn"/></svg></div>
            </div>
          </div>
          <div class="foot d-flex align-items-center"><span>Quick search</span><input class="form-control" value="grid"><button class="btn">Find...</button><span class="flex-grow-1"></span><button class="btn">Save to disk</button><button class="btn cl">Close</button></div>
          <svg class="position-absolute" style="right:2px;bottom:2px" width="9" height="9"><path d="M7 1h2v2H7zM4 4h2v2H4zM7 4h2v2H7zM1 7h2v2H1zM4 7h2v2H4zM7 7h2v2H7z" fill="#c0c0c0"/></svg>
          <svg class="position-absolute" style="left:0;top:0;pointer-events:none" width="800" height="630" viewBox="1441 244 800 630"><path d="M2054 507C2048 507 2042 506 2039 501 2037 497 2040 494 2045 492 2058 489 2072 487 2086 487 2096 486 2108 485 2117 486 2122 487 2125 490 2126 493 2128 497 2129 501 2129 505 2105 508 2080 507 2054 506" fill="none" stroke="#12adcb" stroke-width="2.800" stroke-linecap="round"/></svg>
        </div>
      </div>
      <div class="docs d-flex">
        <div class="dt" style="width:109px;padding-left:9px"><svg><use href="#logo"/></svg>Start page<b>×</b></div>
        <div class="dt act" style="width:126px;margin-left:2px;padding-left:14px"><svg><use href="#logo"/></svg>Unnamed : 1<b>×</b></div>
      </div>
    </div>
    <!-- right bars -->
    <div class="side">
      <div class="vh"></div>
      <div class="si"><svg><use href="#amove"/></svg></div><div class="si"><svg><use href="#arot"/></svg></div><div class="si"><svg><use href="#ascale"/></svg></div><div class="si"><svg><use href="#amirror"/></svg></div><div class="si"><svg><use href="#aoff"/></svg></div><div class="si"><svg><use href="#atrim"/></svg></div><div class="si"><svg><use href="#astr"/></svg></div>
      <div class="ss"></div>
      <div class="si"><svg><use href="#asheep"/></svg></div><div class="si"><svg style="width:22px;margin-right:8px"><use href="#aarr"/></svg><span class="ar position-absolute" style="right:2px"></span></div>
      <div class="ss"></div>
      <div class="si"><svg><use href="#apath"/></svg></div><div class="si"><svg><use href="#apen"/></svg></div>
      <div class="ss"></div>
      <div class="si"><svg><use href="#ajoin"/></svg></div><div class="si"><svg><use href="#asplit"/></svg></div><div class="si"><svg><use href="#aup"/></svg></div><div class="si"><svg><use href="#adn"/></svg></div>
      <div class="ss"></div>
      <div class="si"><svg><use href="#awave"/></svg></div><div class="si"><svg><use href="#aflip"/></svg></div><div class="si"><svg><use href="#agr1"/></svg></div><div class="si"><svg><use href="#agr2"/></svg></div>
      <div class="ss"></div>
      <div class="si"><svg><use href="#abox"/></svg></div>
    </div>
    <div class="side sb">
      <div class="vh"></div>
      <div class="si on"><svg><use href="#block"/></svg></div><div class="si"><svg><use href="#bcoin"/></svg></div><div class="si"><svg><use href="#bmid"/></svg></div><div class="si"><svg><use href="#bcon"/></svg></div><div class="si"><svg><use href="#bpoly"/></svg></div><div class="si"><svg><use href="#bx"/></svg></div><div class="si"><svg><use href="#bperp"/></svg></div><div class="si"><svg><use href="#bdots"/></svg></div><div class="si"><svg><use href="#bpar"/></svg></div><div class="si"><svg><use href="#bbox3"/></svg></div><div class="si"><svg><use href="#bpt"/></svg></div><div class="si"><svg><use href="#bplus"/></svg></div><div class="si"><svg><use href="#bgrid"/></svg></div><div class="si"><svg><use href="#bface"/></svg></div>
      <div class="si"><svg viewBox="0 0 24 24"><text x="8" y="8" font-size="8" font-weight="700" fill="#0f5a60" font-family="Liberation Sans">1.00</text><text x="6" y="24" font-size="8" font-weight="700" fill="#0f5a60" font-family="Liberation Sans" transform="rotate(-90 6 24)">1.00</text><path d="M9 10v12h6M9 10h12" fill="none" stroke="#1fb0b5" stroke-width="2"/></svg></div>
      <div class="si"><svg><use href="#bmesh"/></svg></div>
    </div>
  </div>
</div>
<!-- taskbar -->
<aside class="task d-flex flex-column">
  <div class="ti" style="height:40px"><svg viewBox="0 0 24 24" style="width:16px;height:16px"><path d="M0 3.500l10-1.400v9.400H0zM11 2l13-2v11.500H11zM0 12.500h10v9.400L0 20.500zM11 12.500h13V24l-13-2z" fill="#fff"/></svg></div>
  <div class="ti" style="height:40px"><svg viewBox="0 0 24 24" style="width:17px;height:17px"><circle cx="15" cy="9" r="7.500" fill="none" stroke="#fff" stroke-width="1.800"/><path d="M9 15L1 23" stroke="#fff" stroke-width="2"/></svg></div>
  <div class="ti" style="height:42.500px"><svg viewBox="0 0 24 24" style="width:17px;height:17px"><path d="M0 1h17M0 23h17M3 5h13v14H3zM21 1v7M21 16v7" fill="none" stroke="#fff" stroke-width="1.800"/><rect x="19.500" y="10" width="4" height="4" fill="#fff"/></svg></div>
  <div class="ti h47"><svg><use href="#edge"/></svg></div>
  <div class="ti h47"><svg><use href="#expl"/></svg></div>
  <div class="ti h47"><svg><use href="#store"/></svg></div>
  <div class="ti h47"><svg><use href="#mail"/></svg></div>
  <div class="ti h47 mk"><svg><use href="#fox"/></svg></div>
  <div class="ti h47 mk"><svg><use href="#purple"/></svg></div>
  <div class="ti h47 act"><svg><use href="#logo"/></svg></div>
  <div class="flex-grow-1"></div>
  <div class="tray">
    <div><svg viewBox="0 0 17 17"><path d="M11 2L5 8.500 11 15" fill="none" stroke="#fff" stroke-width="1.300"/></svg></div><div></div>
    <div><svg viewBox="0 0 17 17"><path d="M3 5h8v7H3zM11 8l3-2v5l-3-2M5 2c2-1 3-1 5 0M5 15c2 1 3 1 5 0" fill="none" stroke="#fff"/></svg></div>
    <div><svg viewBox="0 0 17 17"><path d="M1 2h15v10H1zM4 15h9M8.500 12v3" fill="none" stroke="#fff"/><rect x="1.500" y="2.500" width="4" height="4" fill="#1b2745" stroke="#fff"/></svg></div>
    <div><svg viewBox="0 0 17 17"><path d="M1 6c-1 6 4 10 9 10 4 0 6-3 6-4-6 1-11-2-12-8z" fill="#f08a3e"/><path d="M9 1l5 3-5 2z" fill="#444"/></svg></div>
    <div><svg viewBox="0 0 17 17"><path d="M1 6h3l4-3v11l-4-3H1zM11 5c1.500 2 1.500 5 0 7M13.500 3c3 3 3 8 0 11" fill="none" stroke="#fff"/></svg></div>
    <div><svg viewBox="0 0 17 17"><rect width="17" height="17" fill="#e4073c"/><path d="M4 5h7v7H9V7H4zM4 12l3-3M14 6v5M14 12.500v1.500" fill="none" stroke="#fff" stroke-width="1.400"/></svg></div><div></div>
  </div>
  <div class="clk">10:41<br>22.04.2022</div>
  <div class="ntf"><svg width="16" height="16" viewBox="0 0 16 16"><path d="M.5 1h15v12H10l-2 2.500L6 13H.5z" fill="none" stroke="#fff"/></svg></div>
  <div class="tfoot"><i></i></div>
</aside>
</div>
</body></html>
